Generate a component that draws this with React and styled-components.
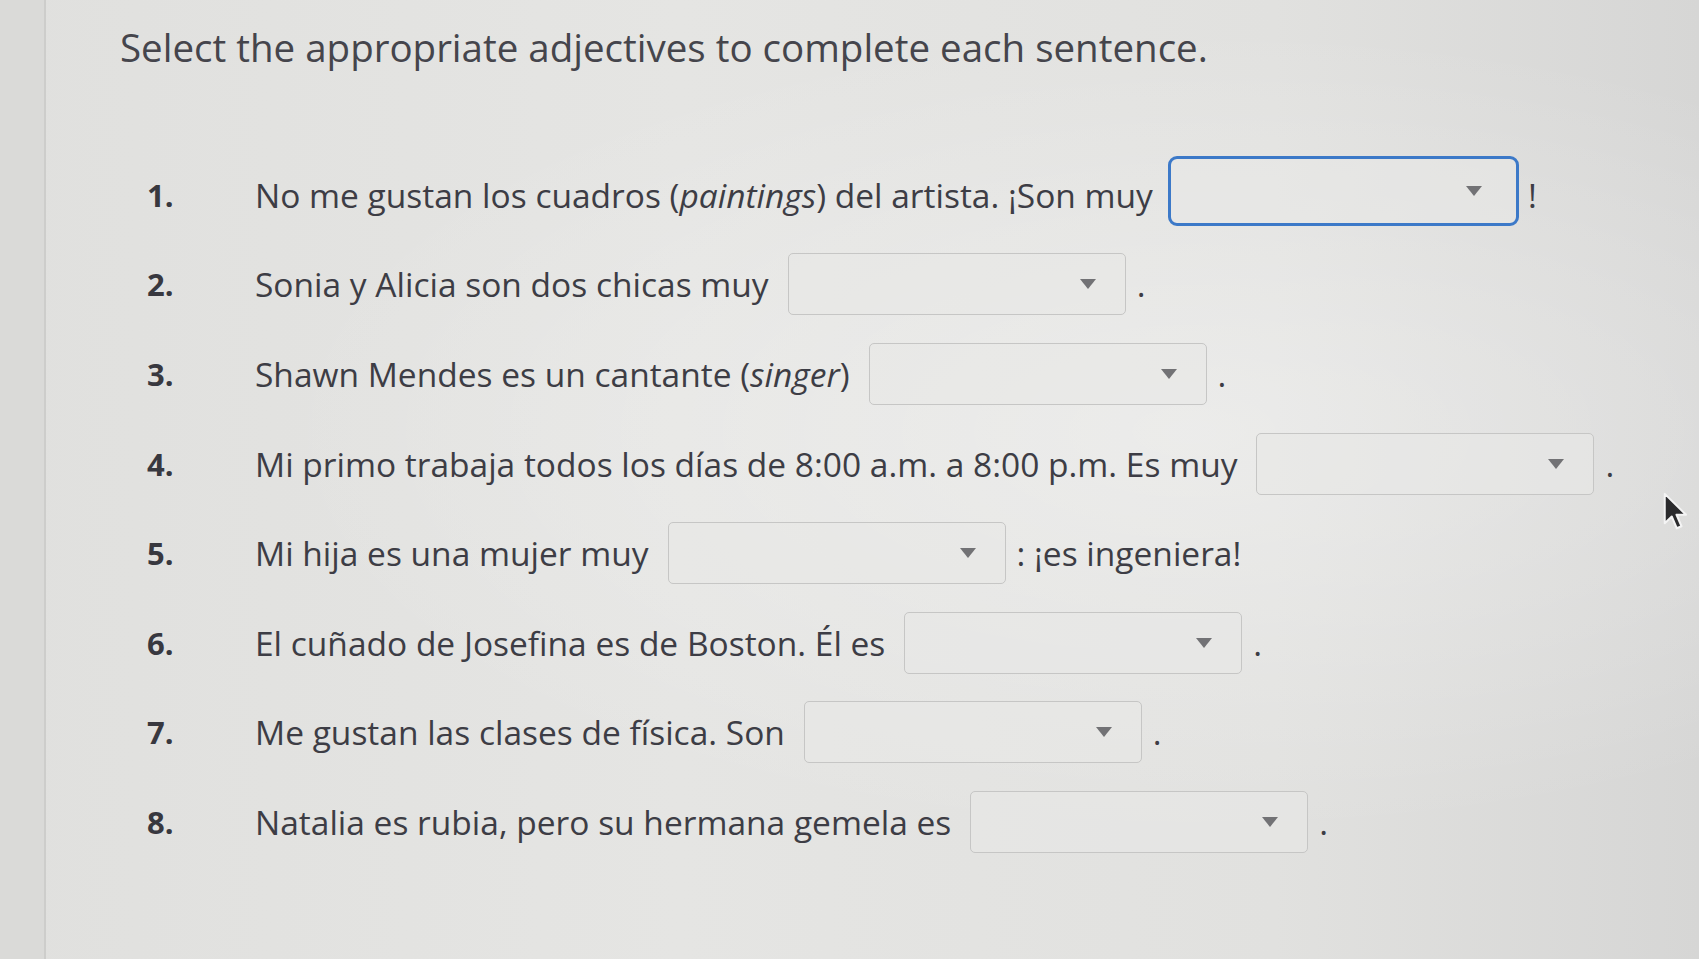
import React from 'react';
import styled, { createGlobalStyle } from 'styled-components';

const items = [
    { n: 1, before: ['No me gustan los cuadros (', <em key="i">paintings</em>, ') del artista. ¡Son muy'], after: '!', focused: true },
    { n: 2, before: ['Sonia y Alicia son dos chicas muy'], after: '.' },
    { n: 3, before: ['Shawn Mendes es un cantante (', <em key="i">singer</em>, ')'], after: '.' },
    { n: 4, before: ['Mi primo trabaja todos los días de 8:00 a.m. a 8:00 p.m. Es muy'], after: '.' },
    { n: 5, before: ['Mi hija es una mujer muy'], after: ': ¡es ingeniera!' },
    { n: 6, before: ['El cuñado de Josefina es de Boston. Él es'], after: '.' },
    { n: 7, before: ['Me gustan las clases de física. Son'], after: '.' },
    { n: 8, before: ['Natalia es rubia, pero su hermana gemela es'], after: '.' },
];

const App = () => {
    return (
        <>
            <GlobalStyle />
            <Page>
                <Rail />
                <Main>
                    <Title>Select the appropriate adjectives to complete each sentence.</Title>
                    <List>
                        {items.map((item) => (
                            <Row key={item.n}>
                                <Num>{item.n}.</Num>
                                <Sentence>
                                    <span>{item.before}</span>
                                    <Select focused={item.focused ? 1 : 0}>
                                        <Caret />
                                    </Select>
                                    <After>{item.after}</After>
                                </Sentence>
                            </Row>
                        ))}
                    </List>
                </Main>
                <Cursor viewBox="0 0 22 32">
                    <path d="M2 1.5 L2 25 L7.6 19.6 L11.6 29 L15.4 27.4 L11.4 18.2 L19 18.2 Z" fill="#2a2a2c" stroke="#f4f4f4" strokeWidth="1.6" strokeLinejoin="round" />
                </Cursor>
            </Page>
        </>
    )
}

// styled-components
const GlobalStyle = createGlobalStyle`
    html, body {
        margin: 0;
        padding: 0;
    }
    body {
        background: #e2e2e0;
        font-family: "Open Sans", "Liberation Sans", sans-serif;
        color: #3d3d45;
    }
`

const Page = styled.div`
    position: relative;
    display: flex;
    min-height: 959px;
    overflow: hidden;
    background:
        radial-gradient(ellipse at 70% 45%, rgba(255,255,255,.35), rgba(255,255,255,0) 55%),
        linear-gradient(90deg, #e0e0de 0%, #e5e5e3 40%, #e1e1df 75%, #d6d6d5 100%);
`

const Rail = styled.div`
    width: 44px;
    flex-shrink: 0;
    background: #dadad8;
    border-right: 2px solid #cdcdcb;
`

const Main = styled.div`
    flex: 1;
    padding: 24px 0 0 74px;
`

const Title = styled.h1`
    margin: 0;
    font-size: 38.5px;
    line-height: 47px;
    font-weight: 400;
    color: #45454c;
    white-space: nowrap;
`

const List = styled.div`
    display: flex;
    flex-direction: column;
    margin: 79px 0 0 27px;
`

const Row = styled.div`
    display: flex;
    align-items: center;
    height: 89.6px;
`

const Num = styled.span`
    width: 108px;
    flex-shrink: 0;
    font-size: 31px;
    font-weight: 700;
    color: #38383f;
`

const Sentence = styled.div`
    display: flex;
    align-items: center;
    font-size: 33.5px;
    white-space: nowrap;
    color: #3d3d45;
    & em {
        font-style: italic;
    }
`

const Select = styled.div`
    position: relative;
    display: flex;
    align-items: center;
    justify-content: flex-end;
    box-sizing: border-box;
    width: ${p => p.focused ? '351px' : '338px'};
    height: ${p => p.focused ? '70px' : '62px'};
    margin: ${p => p.focused ? '-8px 9px 0 15px' : '0 11px 0 19px'};
    padding-right: ${p => p.focused ? '34px' : '29px'};
    border: ${p => p.focused ? '3.5px solid #3c79c8' : '1.5px solid #c6c6c5'};
    border-radius: ${p => p.focused ? '9px' : '5px'};
    background: rgba(232, 232, 230, .6);
`

const Caret = styled.span`
    width: 0;
    height: 0;
    border-left: 8px solid transparent;
    border-right: 8px solid transparent;
    border-top: 10px solid #727275;
`

const After = styled.span`
    color: #3d3d45;
`

const Cursor = styled.svg`
    position: absolute;
    left: 1662px;
    top: 492px;
    width: 28px;
    height: 40px;
`

export default App;
